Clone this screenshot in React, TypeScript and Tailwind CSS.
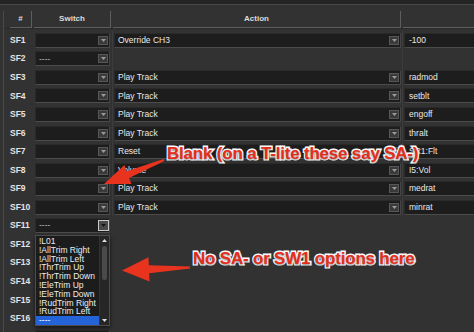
import React from 'react';

interface Row {
  sf: string;
  sw: string | null;
  act: string | null;
  param: string | null;
  focused?: boolean;
}

const rows: Row[] = [
  { sf: "SF1", sw: "", act: "Override CH3", param: "-100" },
  { sf: "SF2", sw: "----", act: null, param: null },
  { sf: "SF3", sw: "", act: "Play Track", param: "radmod" },
  { sf: "SF4", sw: "", act: "Play Track", param: "setblt" },
  { sf: "SF5", sw: "", act: "Play Track", param: "engoff" },
  { sf: "SF6", sw: "", act: "Play Track", param: "thralt" },
  { sf: "SF7", sw: "", act: "Reset", param: "SR1:Flt" },
  { sf: "SF8", sw: "", act: "Volume", param: "I5:Vol" },
  { sf: "SF9", sw: "", act: "Play Track", param: "medrat" },
  { sf: "SF10", sw: "", act: "Play Track", param: "minrat" },
  { sf: "SF11", sw: "----", act: null, param: null, focused: true },
  { sf: "SF12", sw: null, act: null, param: null },
  { sf: "SF13", sw: null, act: null, param: null },
  { sf: "SF14", sw: null, act: null, param: null },
  { sf: "SF15", sw: null, act: null, param: null },
  { sf: "SF16", sw: null, act: null, param: null },
  { sf: "", sw: "", act: null, param: null },
];

const popupItems = [
  "!L01",
  "!AllTrim Right",
  "!AllTrim Left",
  "!ThrTrim Up",
  "!ThrTrim Down",
  "!EleTrim Up",
  "!EleTrim Down",
  "!RudTrim Right",
  "!RudTrim Left",
];

const Caret: React.FC<{ color?: string; up?: boolean }> = ({ color = "#cfcfcf", up }) => (
  <svg width="5" height="3" viewBox="0 0 5 3">
    <polygon points={up ? "0,3 5,3 2.5,0" : "0,0 5,0 2.5,3"} fill={color} />
  </svg>
);

const Combo: React.FC<{ text: string; className: string; focused?: boolean }> = ({ text, className, focused }) => (
  <div className={`h-[15px] flex items-center bg-[#1d1d1d] border border-[#2a2a2a] border-b-[#4b4b4b] border-r-[#454545] ${className}`}>
    <span className={`flex-1 pl-[3px] text-[8.5px] leading-none whitespace-nowrap ${text === "----" ? "text-[#b8b8b8]" : "text-[#e8e8e8]"}`}>
      {text}
    </span>
    {focused ? (
      <div className="w-[11px] h-[11px] border border-[#c8c8c8] bg-[#4a4a4a] flex items-center justify-center">
        <Caret color="#141414" />
      </div>
    ) : (
      <div className="w-[10px] h-[9px] mr-[1px] border border-[#575757] bg-[#3a3a3a] flex items-center justify-center">
        <Caret color="#9a9a9a" />
      </div>
    )}
  </div>
);

const Field: React.FC<{ text: string }> = ({ text }) => (
  <div className="h-[15px] w-[80px] flex items-center bg-[#1d1d1d] border border-[#2a2a2a] border-b-[#4b4b4b]">
    <span className="pl-[4px] text-[8.5px] leading-none text-[#e8e8e8] whitespace-nowrap">{text}</span>
  </div>
);

const annotation =
  "absolute text-[17px] leading-[17px] font-bold tracking-[-0.2px] text-[#e52d1c] whitespace-nowrap [-webkit-text-stroke:3px_#ffffff] [paint-order:stroke_fill] [text-shadow:0_1px_2px_rgba(0,0,0,0.45)]";

export default function App() {
  return (
    <div className="relative w-[474px] h-[332px] overflow-hidden bg-[#323232] font-['Liberation_Sans',Arial,sans-serif]">
      <div className="h-[5px] bg-[#242424] border-b border-[#474747]" />
      <div className="ml-[3px] h-full border-l border-[#4a4a4a]">
        {/* Header */}
        <div className="mt-[6px] mb-[2px] flex h-[18px] border-b border-[#2a2a2a]">
          <div className="shrink-0 ml-[6px] w-[22px] flex items-center justify-center border-r border-b border-[#5e5e5e] text-[8px] font-bold text-[#dcdcdc]">#</div>
          <div className="shrink-0 ml-[2px] w-[77px] flex items-center justify-center border-r border-b border-[#5e5e5e] text-[8px] font-bold text-[#dcdcdc]">Switch</div>
          <div className="shrink-0 ml-[2px] w-[288px] flex items-center justify-center border-r border-b border-[#5e5e5e] text-[8px] font-bold text-[#dcdcdc]">Action</div>
          <div className="ml-[2px] flex-1 min-w-0 border-b border-[#5e5e5e]" />
        </div>

        {/* Rows */}
        {rows.map((r, i) => (
          <div key={i} className="flex h-[18.55px] items-center">
            <div className="shrink-0 w-[30px] pl-[6px] text-[8.5px] font-bold text-[#e4e4e4] whitespace-nowrap">{r.sf}</div>
            <div className="shrink-0 w-[78px] h-full flex items-center">
              {r.sw !== null && <Combo text={r.sw} className="ml-[1px] w-[75px]" focused={r.focused} />}
            </div>
            <div className={`shrink-0 w-[290px] h-full flex items-center ${i < 10 ? "border-l border-[#3c3c3c]" : ""}`}>
              {r.act !== null && <Combo text={r.act} className="ml-[1px] w-[287px]" />}
            </div>
            <div className={`flex-1 min-w-0 h-full flex items-center overflow-hidden ${i < 10 ? "border-l border-[#3c3c3c]" : ""}`}>
              {r.param !== null && <div className="ml-[1px]"><Field text={r.param} /></div>}
            </div>
          </div>
        ))}
      </div>

      {/* Open combo popup */}
      <div className="absolute left-[35px] top-[235px] w-[75px] h-[91px] flex bg-[#1c1c1c] border border-[#4c4c4c] shadow-[0_2px_4px_rgba(0,0,0,0.6)]">
        <div className="flex-1 flex flex-col pt-[1px]">
          {popupItems.map((it) => (
            <div key={it} className="h-[8.8px] pl-[3px] text-[8.5px] leading-[8.8px] text-[#ededed] whitespace-nowrap">{it}</div>
          ))}
          <div className="mt-auto h-[9px] pl-[3px] bg-[#2563d9] text-[8.5px] leading-[9px] text-white">----</div>
        </div>
        <div className="w-[10px] flex flex-col bg-[#262626] border-l border-[#333333]">
          <div className="h-[9px] flex items-center justify-center"><Caret color="#e0e0e0" up /></div>
          <div className="flex-1 px-[2px] pt-[1px]">
            <div className="h-[34px] rounded-[2px] bg-[#4a4a4a]" />
          </div>
          <div className="h-[9px] flex items-center justify-center"><Caret color="#e0e0e0" /></div>
        </div>
      </div>

      {/* Arrows */}
      <svg className="absolute left-0 top-0" width="474" height="332" viewBox="0 0 474 332">
        <polygon
          points="104,184 131.5,184 129,178 164.4,160.9 163.6,159.1 126.6,171.3 124.5,165"
          fill="#e8341f"
        />
        <polygon
          points="122,270.5 149.5,281.5 149.2,273.3 190,268.5 190,266.5 148.8,265.3 148.5,257.3"
          fill="#e8341f"
        />
      </svg>

      <span className={`${annotation} left-[167px] top-[145px]`}>Blank (on a T-lite these say SA-)</span>
      <span className={`${annotation} left-[193px] top-[250px]`}>No SA- or SW1 options here</span>
    </div>
  );
}
